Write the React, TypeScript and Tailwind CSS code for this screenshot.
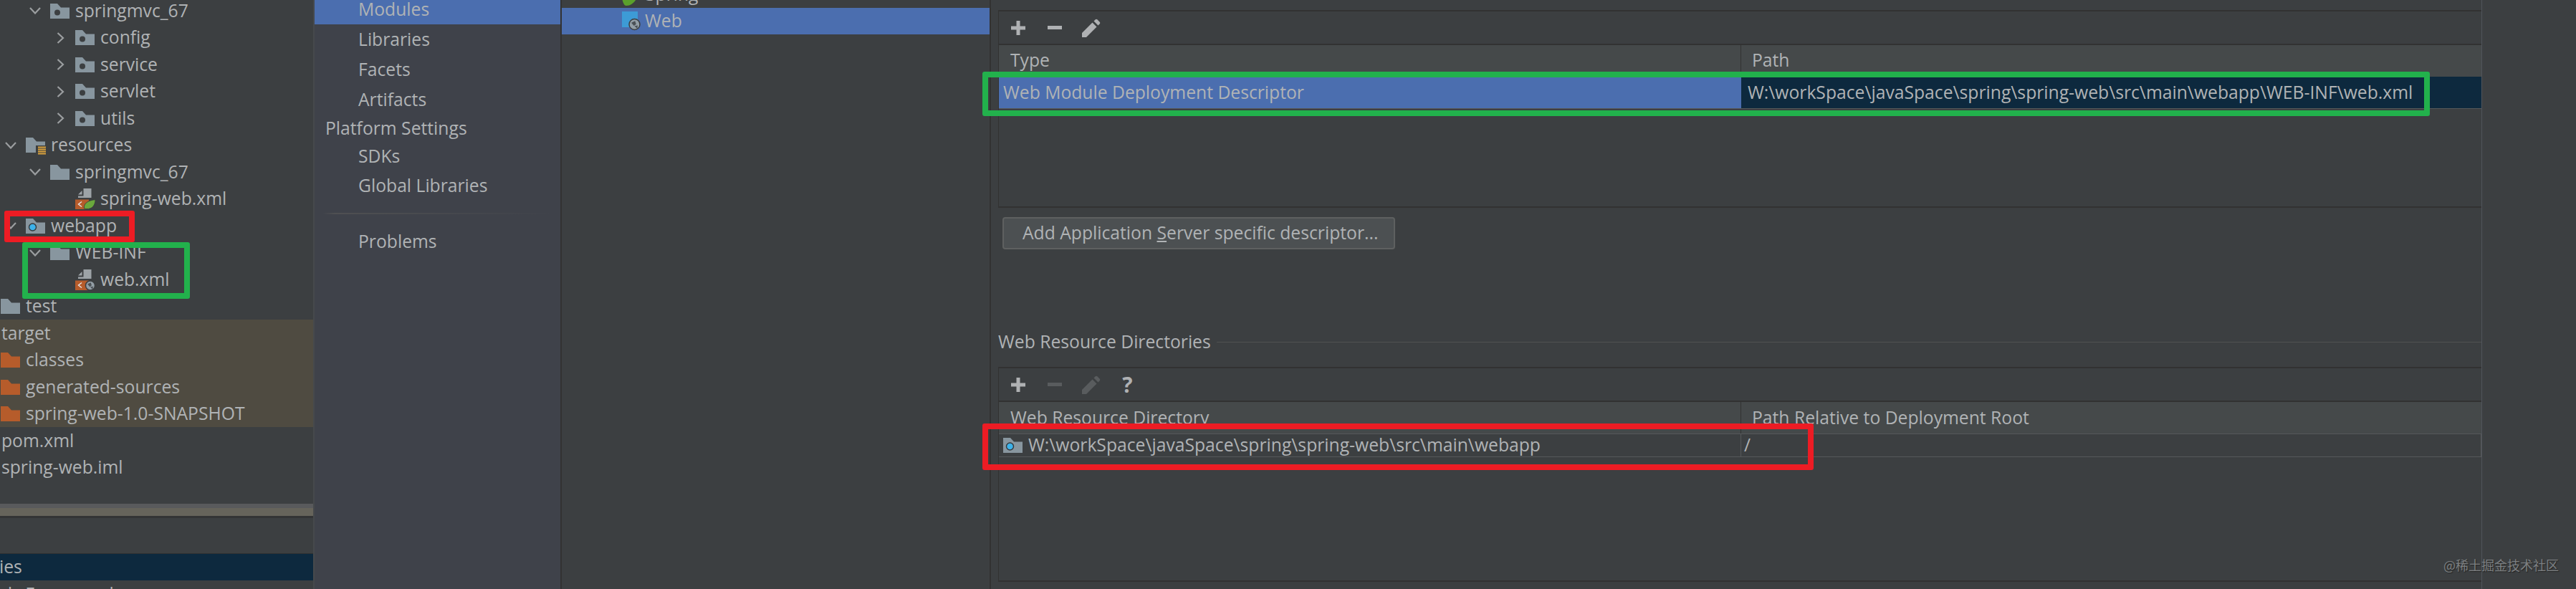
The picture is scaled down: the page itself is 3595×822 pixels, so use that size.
// IDEA の Project Structure 画面のスクリーンショットを再現する。
// 左からプロジェクトツリー、設定サイドバー、モジュール一覧、Web ファセット詳細。
import type { ReactNode } from "react";

const GREY = "#88969f";
const ORANGE = "#b65c2b";

function ChevronDown() {
  return (
    <svg width="16" height="10" viewBox="0 0 16 10" fill="none" stroke="#9b9ea0" strokeWidth="2.2">
      <path d="M1 1l7 7.5L15 1" />
    </svg>
  );
}

function ChevronRight() {
  return (
    <svg width="11" height="16" viewBox="0 0 11 16" fill="none" stroke="#9b9ea0" strokeWidth="2.2">
      <path d="M1.5 1l7.5 7-7.5 7" />
    </svg>
  );
}

function Folder({ color = GREY, children }: { color?: string; children?: ReactNode }) {
  return (
    <svg width="27" height="21" viewBox="0 0 27 21" className="overflow-visible">
      <path d="M0 0H10L15 5.5H27V21H0Z" fill={color} />
      {children}
    </svg>
  );
}

function PackageFolder() {
  return (
    <Folder>
      <circle cx="10" cy="12.5" r="4" fill="#3c3f41" />
    </Folder>
  );
}

function WebFolder() {
  return (
    <Folder>
      <circle cx="9.5" cy="12" r="5" fill="#3cb2ea" stroke="#33383c" strokeWidth="1.4" />
    </Folder>
  );
}

function ResourcesFolder() {
  return (
    <Folder>
      <rect x="14" y="11" width="14" height="13" fill="#3c3f41" />
      <path d="M17 13.5h11M17 16.5h11M17 19.5h11M17 22.5h11" stroke="#d8a13e" strokeWidth="1.8" />
    </Folder>
  );
}

function GlobeBadge({ cx, cy, r }: { cx: number; cy: number; r: number }) {
  return (
    <g>
      <circle cx={cx} cy={cy} r={r} fill="#939ea6" stroke="#3c3f41" strokeWidth="1.5" />
      <path
        d={`M${cx - r * 0.6} ${cy - r * 0.3}l${r * 0.7} ${-r * 0.35}l${r * 0.2} ${r * 0.6}l${-r * 0.4} ${r * 0.3}z M${cx} ${cy + r * 0.3}l${r * 0.6} ${-r * 0.1}l${-r * 0.1} ${r * 0.6}z`}
        fill="#4a5055"
      />
    </g>
  );
}

function XmlIcon({ spring }: { spring?: boolean }) {
  return (
    <svg width="28" height="29" viewBox="0 0 28 29">
      <path d="M11.5 0H22.5V13H4V10.5H11.5Z M4 8.5L9.5 3V8.5Z" fill="#9da3a7" />
      <rect x="0" y="15.5" width="19" height="13.5" fill={ORANGE} />
      <path d="M9 18.5L4.5 22L9 25.5" fill="none" stroke="#e6e6e6" strokeWidth="1.4" />
      {spring ? (
        <path d="M12.5 28C11.5 22 16 17 28 15.5C28 23 24 29 16 28.5C14.5 28.4 13.5 28.2 12.5 28Z" fill="#6aa83c" stroke="#33383c" strokeWidth="0.8" />
      ) : (
        <GlobeBadge cx={21} cy={22.5} r={6.5} />
      )}
    </svg>
  );
}

type Row = { label: string; text: number; chevron?: "down" | "right"; icon?: ReactNode; excluded?: boolean };

// テキスト開始位置ごとの行の字下げ
const indent: Record<number, string> = {
  2: "ml-[-75px]",
  36: "ml-[-41px]",
  71: "ml-[-6px]",
  105: "ml-[28px]",
  140: "ml-[63px]",
};

const orange = <Folder color={ORANGE} />;

const treeRows: Row[] = [
  { label: "springmvc_67", text: 105, chevron: "down", icon: <PackageFolder /> },
  { label: "config", text: 140, chevron: "right", icon: <PackageFolder /> },
  { label: "service", text: 140, chevron: "right", icon: <PackageFolder /> },
  { label: "servlet", text: 140, chevron: "right", icon: <PackageFolder /> },
  { label: "utils", text: 140, chevron: "right", icon: <PackageFolder /> },
  { label: "resources", text: 71, chevron: "down", icon: <ResourcesFolder /> },
  { label: "springmvc_67", text: 105, chevron: "down", icon: <Folder /> },
  { label: "spring-web.xml", text: 140, icon: <XmlIcon spring /> },
  { label: "webapp", text: 71, chevron: "down", icon: <WebFolder /> },
  { label: "WEB-INF", text: 105, chevron: "down", icon: <Folder /> },
  { label: "web.xml", text: 140, icon: <XmlIcon /> },
  { label: "test", text: 36, icon: <Folder /> },
  { label: "target", text: 2, excluded: true },
  { label: "classes", text: 36, icon: orange, excluded: true },
  { label: "generated-sources", text: 36, icon: orange, excluded: true },
  { label: "spring-web-1.0-SNAPSHOT", text: 36, icon: orange, excluded: true },
  { label: "pom.xml", text: 2 },
  { label: "spring-web.iml", text: 2 },
];

function ProjectTree() {
  return (
    <div className="flex w-[437px] shrink-0 flex-col">
      <div className="h-[703px] shrink-0 overflow-hidden">
        <div className="mt-[-3.75px]">
          {treeRows.map((row, i) => (
            <div key={i} className={`h-[37.5px] ${row.excluded ? "bg-[#4f4b41]" : ""}`}>
              <div className={`flex h-full items-center ${indent[row.text]}`}>
                <span className="flex w-[42px] shrink-0 items-center justify-center">
                  {row.chevron === "down" && <ChevronDown />}
                  {row.chevron === "right" && <ChevronRight />}
                </span>
                <span className="flex w-[35px] shrink-0 items-center">{row.icon}</span>
                <span className="whitespace-nowrap">{row.label}</span>
              </div>
            </div>
          ))}
        </div>
      </div>
      <div className="h-[6px] shrink-0 bg-[#595a5c]" />
      <div className="h-[11px] shrink-0 bg-[#66645b]" />
      <div className="h-[3px] shrink-0 bg-[#333435]" />
      <div className="h-[50px] shrink-0 border-b border-[#323232]" />
      <div className="flex h-[37px] shrink-0 items-center bg-[#0d293e]">
        <span className="ml-[-1px]">ies</span>
      </div>
      <div className="flex h-[38px] shrink-0 items-center whitespace-nowrap pl-[2px]">ds Frameworks</div>
    </div>
  );
}

function NavItem({ label, active, h = "h-[42px]" }: { label: string; active?: boolean; h?: string }) {
  return (
    <div className={`flex shrink-0 items-center pl-[61px] ${h} ${active ? "bg-[#4b6eaf]" : ""}`}>{label}</div>
  );
}

function Sidebar() {
  return (
    <div className="flex w-[345px] shrink-0 flex-col border-l-2 border-[#46494c] bg-[#3f424a]">
      <div className="mt-[-8px]">
        <NavItem label="Modules" active />
        <NavItem label="Libraries" />
        <NavItem label="Facets" />
        <NavItem label="Artifacts" />
        <div className="flex h-[38px] items-center pl-[15px]">Platform Settings</div>
        <NavItem label="SDKs" h="h-[40px]" />
        <NavItem label="Global Libraries" />
        <div className="flex h-[36px] items-center px-[12px]">
          <div className="h-[2px] w-full bg-gradient-to-r from-transparent via-[#4f5052] via-[5%] to-transparent" />
        </div>
        <NavItem label="Problems" />
      </div>
    </div>
  );
}

function ModuleList() {
  return (
    <div className="flex w-[601px] shrink-0 flex-col border-x-2 border-[#323232]">
      <div className="mt-[-26px] flex h-[37px] items-center pl-[84px]">
        <svg width="23" height="22" viewBox="0 0 23 22" className="mr-[10px] mt-[10px] shrink-0">
          <path d="M0 10C6 8 14 4 23 0C23 10 16 21 6 21C3 21 1 16 0 10Z" fill="#5aa02c" />
        </svg>
        Spring
      </div>
      <div className="flex h-[37px] items-center bg-[#4b6eaf] pl-[84px]">
        <svg width="27" height="27" viewBox="0 0 27 27" className="mr-[5px] shrink-0">
          <rect x="0" y="0" width="22" height="22" fill="#3d9bd6" />
          <GlobeBadge cx={17.5} cy={18} r={7.5} />
        </svg>
        Web
      </div>
    </div>
  );
}

function Plus({ color }: { color: string }) {
  return (
    <svg width="20" height="20" viewBox="0 0 20 20" fill={color}>
      <path d="M7.5 0h5v7.5H20v5h-7.5V20h-5v-7.5H0v-5h7.5z" />
    </svg>
  );
}

function Minus({ color }: { color: string }) {
  return (
    <svg width="20" height="5" viewBox="0 0 20 5" fill={color}>
      <rect width="20" height="5" />
    </svg>
  );
}

function Pencil({ color }: { color: string }) {
  return (
    <svg width="26" height="26" viewBox="0 0 26 26" fill={color}>
      <path d="M0 26V20L14.5 5.5L20.5 11.5L6 26Z" />
      <path d="M16.5 3.5L18.5 1.5A2.2 2.2 0 0 1 21.6 1.5L24.5 4.4A2.2 2.2 0 0 1 24.5 7.5L22.5 9.5Z" />
    </svg>
  );
}

function Slot({ children }: { children: ReactNode }) {
  return <div className="flex w-[51px] items-center justify-center">{children}</div>;
}

function DescriptorTable() {
  return (
    <div className="flex h-[276px] shrink-0 flex-col border-y-2 border-l border-[#323232]">
      <div className="flex h-[45px] shrink-0 items-center pl-px">
        <Slot><Plus color="#afb1b3" /></Slot>
        <Slot><Minus color="#afb1b3" /></Slot>
        <Slot><Pencil color="#afb1b3" /></Slot>
      </div>
      <div className="flex h-[46px] shrink-0 border-y-2 border-t-[#323232] border-b-[#45494a] bg-[#45494a]">
        <div className="flex w-[1036px] items-center border-r border-[#323232] pl-[16px]">Type</div>
        <div className="flex flex-1 items-center pl-[15px]">Path</div>
      </div>
      <div className="flex h-[45px] shrink-0 border-b border-[#55585a]">
        <div className="flex w-[1036px] items-center bg-[#4b6eaf] pl-[6px]">Web Module Deployment Descriptor</div>
        <div className="flex flex-1 items-center whitespace-nowrap bg-[#0d293e] pl-[9px]">
          W:\workSpace\javaSpace\spring\spring-web\src\main\webapp\WEB-INF\web.xml
        </div>
      </div>
    </div>
  );
}

function ResourceTable() {
  return (
    <div className="flex h-[300px] shrink-0 flex-col border-y-2 border-l border-[#323232]">
      <div className="flex h-[45px] shrink-0 items-center pl-px">
        <Slot><Plus color="#afb1b3" /></Slot>
        <Slot><Minus color="#595c5e" /></Slot>
        <Slot><Pencil color="#595c5e" /></Slot>
        <Slot><span className="text-[30px] font-bold text-[#afb1b3]">?</span></Slot>
      </div>
      <div className="flex h-[46px] shrink-0 border-t-2 border-[#323232] bg-[#45494a]">
        <div className="flex w-[1036px] items-center border-r border-[#323232] pl-[16px]">Web Resource Directory</div>
        <div className="flex flex-1 items-center pl-[15px]">Path Relative to Deployment Root</div>
      </div>
      <div className="flex h-[33px] shrink-0 border-y border-[#55585a]">
        <div className="flex w-[1036px] items-center whitespace-nowrap border-r border-[#55585a] pl-[6px]">
          <span className="mr-[8px] shrink-0"><WebFolder /></span>
          W:\workSpace\javaSpace\spring\spring-web\src\main\webapp
        </div>
        <div className="flex flex-1 items-center border-r border-[#55585a] pl-[4px]">/</div>
      </div>
    </div>
  );
}

function WebPanel() {
  return (
    <div className="flex w-[2081px] shrink-0 flex-col border-r border-[#50545a] pl-[10px]">
      <div className="h-[14px] shrink-0" />
      <DescriptorTable />
      <div className="ml-[6px] mt-[13px] flex h-[45px] w-[548px] shrink-0 items-center rounded-[4px] border-2 border-[#5e6060] bg-[#4c5052] pl-[26px]">
        <span>Add Application <span className="underline underline-offset-2">S</span>erver specific descriptor...</span>
      </div>
      <div className="mt-[114px] flex h-[30px] shrink-0 items-center gap-[8px]">
        <span className="whitespace-nowrap">Web Resource Directories</span>
        <div className="h-px flex-1 bg-[#515151]" />
      </div>
      <div className="h-[20px] shrink-0" />
      <ResourceTable />
    </div>
  );
}

// 注釈の赤枠・緑枠はスクリーンショットの上に重ねる
function Marks() {
  return (
    <>
      <div className="absolute left-[6px] top-[294px] h-[44px] w-[182px] rounded-[3px] border-8 border-[#ed1c24]" />
      <div className="absolute left-[31px] top-[338px] h-[79px] w-[234px] rounded-[3px] border-8 border-[#22b14c]" />
      <div className="absolute left-[1371px] top-[100px] h-[62px] w-[2020px] rounded-[3px] border-8 border-[#22b14c]" />
      <div className="absolute left-[1371px] top-[591px] h-[65px] w-[1160px] rounded-[3px] border-8 border-[#ed1c24]" />
      <div className="absolute right-[24px] top-[775px] font-['Noto_Sans_CJK_SC',sans-serif] text-[18px] leading-[26px] text-[#7d8082] [text-shadow:1px_1px_1px_#222]">
        @稀土掘金技术社区
      </div>
    </>
  );
}

export default function App() {
  return (
    <div className="relative flex h-[822px] w-[3595px] overflow-hidden bg-[#3c3f41] font-['Open_Sans','Noto_Sans_CJK_SC',sans-serif] text-[24.7px] leading-none text-[#b0b3b5]">
      <ProjectTree />
      <Sidebar />
      <ModuleList />
      <WebPanel />
      <Marks />
    </div>
  );
}
